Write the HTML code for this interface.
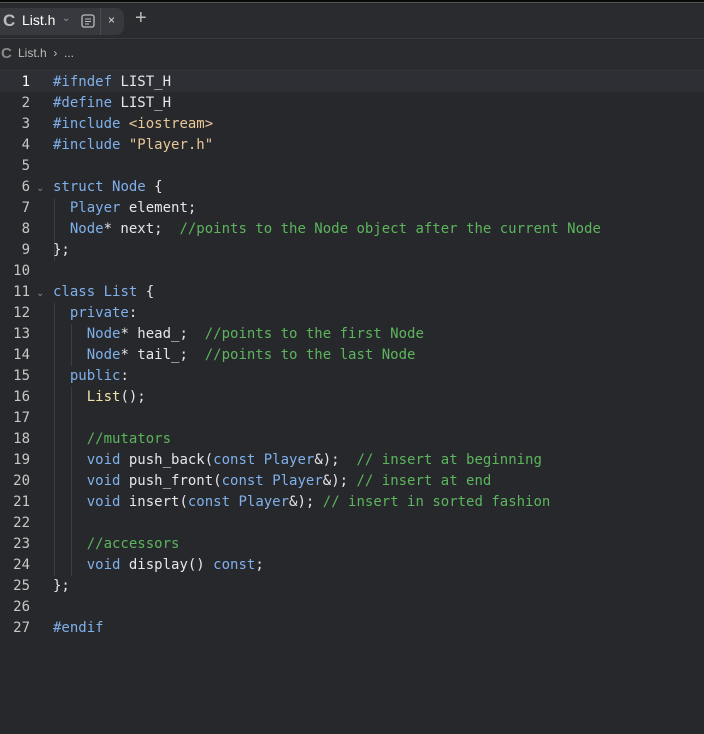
<!DOCTYPE html>
<html><head><meta charset="utf-8"><style>
*{margin:0;padding:0;box-sizing:border-box}
body{width:704px;height:734px;background:#27282c;overflow:hidden;font-family:"Liberation Sans",sans-serif;position:relative}
.top{position:absolute;left:0;top:0;width:704px;height:3px;background:#0a0a0a;border-bottom:1px solid #555}
.tabbar{position:absolute;left:0;top:4px;width:704px;height:35px;background:#2a2b2f;border-bottom:1px solid #3a3b3f}
.tab{position:absolute;left:0;top:4px;width:124px;height:27px;background:#38393e;border-radius:0 8px 8px 0}
.crumb{position:absolute;left:0;top:40px;width:704px;height:31px;background:#2a2b2f;border-bottom:1px solid #333438}
.code{position:absolute;left:0;top:72px;width:704px;font-family:"DejaVu Sans Mono",monospace;font-size:14px;line-height:21px;color:#e4e6ea}
.ln{position:absolute;left:0;width:30px;text-align:right;color:#c8c8c8}
.tx{position:absolute;left:53px;white-space:pre}
.k{color:#7fb0ea}.c{color:#5cb55c}.s{color:#e9c898}.f{color:#efe2a8}
.cur{position:absolute;left:0;top:-1px;width:704px;height:21px;background:#2e2f34}
.fold{position:absolute;left:36px;color:#888;font-size:10px;font-family:"DejaVu Sans",sans-serif}
.guide{position:absolute;width:1px;background:#3c3d42}
</style></head><body>
<div class="top"></div>
<div class="tabbar">
 <div class="tab">
  <span style="position:absolute;left:3px;top:3px;font-weight:bold;color:#bbb;font-size:17px">C</span>
  <span style="position:absolute;left:22px;top:4px;color:#fff;font-size:14px">List.h</span>
  <span style="position:absolute;left:62px;top:5px;color:#999;font-size:10px;font-family:'DejaVu Sans'">⌄</span>
  <svg style="position:absolute;left:81px;top:6px" width="14" height="14"><rect x="1" y="1" width="12" height="12" rx="2" fill="none" stroke="#bbb" stroke-width="1.3"/><path d="M4 5h6M4 7.5h6M4 10h4" stroke="#bbb"/></svg>
  <div style="position:absolute;left:100px;top:0;width:1px;height:27px;background:#4a4b50"></div>
  <span style="position:absolute;left:108px;top:5px;color:#ddd;font-size:12px">×</span>
 </div>
 <span style="position:absolute;left:135px;top:3px;color:#bbb;font-size:20px">+</span>
</div>
<div class="crumb">
 <span style="position:absolute;left:1px;top:5px;font-weight:bold;color:#888;font-size:15px">C</span>
 <span style="position:absolute;left:18px;top:6px;color:#bbb;font-size:12px">List.h &nbsp;›&nbsp; ...</span>
</div>
<div class="code">
<div class="cur"></div>
<div class="guide" style="left:54px;top:126px;height:63px"></div>
<div class="guide" style="left:54px;top:231px;height:273px"></div>
<div class="guide" style="left:71px;top:252px;height:42px"></div>
<div class="guide" style="left:71px;top:315px;height:189px"></div>
<div class="ln" style="top:0;color:#fff">1</div><div class="tx" style="top:0"><span class="k">#ifndef</span> LIST_H</div>
<div class="ln" style="top:21px">2</div><div class="tx" style="top:21px"><span class="k">#define</span> LIST_H</div>
<div class="ln" style="top:42px">3</div><div class="tx" style="top:42px"><span class="k">#include</span> <span class="s">&lt;iostream&gt;</span></div>
<div class="ln" style="top:63px">4</div><div class="tx" style="top:63px"><span class="k">#include</span> <span class="s">"Player.h"</span></div>
<div class="ln" style="top:84px">5</div>
<div class="ln" style="top:105px">6</div><div class="fold" style="top:106px">⌄</div><div class="tx" style="top:105px"><span class="k">struct</span> <span class="k">Node</span> {</div>
<div class="ln" style="top:126px">7</div><div class="tx" style="top:126px">  <span class="k">Player</span> element;</div>
<div class="ln" style="top:147px">8</div><div class="tx" style="top:147px">  <span class="k">Node</span>* next;  <span class="c">//points to the Node object after the current Node</span></div>
<div class="ln" style="top:168px">9</div><div class="tx" style="top:168px">};</div>
<div class="ln" style="top:189px">10</div>
<div class="ln" style="top:210px">11</div><div class="fold" style="top:211px">⌄</div><div class="tx" style="top:210px"><span class="k">class</span> <span class="k">List</span> {</div>
<div class="ln" style="top:231px">12</div><div class="tx" style="top:231px">  <span class="k">private</span>:</div>
<div class="ln" style="top:252px">13</div><div class="tx" style="top:252px">    <span class="k">Node</span>* head_;  <span class="c">//points to the first Node</span></div>
<div class="ln" style="top:273px">14</div><div class="tx" style="top:273px">    <span class="k">Node</span>* tail_;  <span class="c">//points to the last Node</span></div>
<div class="ln" style="top:294px">15</div><div class="tx" style="top:294px">  <span class="k">public</span>:</div>
<div class="ln" style="top:315px">16</div><div class="tx" style="top:315px">    <span class="f">List</span>();</div>
<div class="ln" style="top:336px">17</div>
<div class="ln" style="top:357px">18</div><div class="tx" style="top:357px">    <span class="c">//mutators</span></div>
<div class="ln" style="top:378px">19</div><div class="tx" style="top:378px">    <span class="k">void</span> push_back(<span class="k">const</span> <span class="k">Player</span>&amp;);  <span class="c">// insert at beginning</span></div>
<div class="ln" style="top:399px">20</div><div class="tx" style="top:399px">    <span class="k">void</span> push_front(<span class="k">const</span> <span class="k">Player</span>&amp;); <span class="c">// insert at end</span></div>
<div class="ln" style="top:420px">21</div><div class="tx" style="top:420px">    <span class="k">void</span> insert(<span class="k">const</span> <span class="k">Player</span>&amp;); <span class="c">// insert in sorted fashion</span></div>
<div class="ln" style="top:441px">22</div>
<div class="ln" style="top:462px">23</div><div class="tx" style="top:462px">    <span class="c">//accessors</span></div>
<div class="ln" style="top:483px">24</div><div class="tx" style="top:483px">    <span class="k">void</span> display() <span class="k">const</span>;</div>
<div class="ln" style="top:504px">25</div><div class="tx" style="top:504px">};</div>
<div class="ln" style="top:525px">26</div>
<div class="ln" style="top:546px">27</div><div class="tx" style="top:546px"><span class="k">#endif</span></div>
</div>
</body></html>
